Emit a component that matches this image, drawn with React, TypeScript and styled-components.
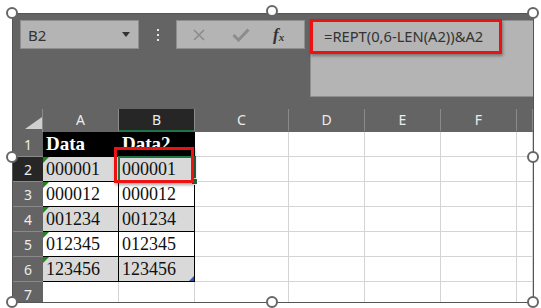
import React from 'react';
import styled, { createGlobalStyle } from 'styled-components';

const GlobalStyle = createGlobalStyle`
  html, body {
    margin: 0;
    padding: 0;
    background: #ffffff;
  }
  body {
    font-family: 'Noto Sans', 'Open Sans', sans-serif;
  }
`;

const columns = ['A', 'B', 'C', 'D', 'E', 'F', ''];
const colWidths = '30px 76px 76px 94px 76px 76px 76px 1fr';

const rows = [
  ['Data', 'Data2'],
  ['000001', '000001'],
  ['000012', '000012'],
  ['001234', '001234'],
  ['012345', '012345'],
  ['123456', '123456'],
  ['', ''],
];

const handles = [
  { x: 12, y: 13 },
  { x: 272, y: 11 },
  { x: 533, y: 13 },
  { x: 12, y: 157 },
  { x: 533, y: 157 },
  { x: 12, y: 302 },
  { x: 272, y: 302 },
  { x: 533, y: 302 },
];

const App: React.FC = () => {
  return (
    <Stage>
      <GlobalStyle />
      <Frame>
        <Toolbar>
          <NameBox>
            <span>B2</span>
            <DropArrow />
          </NameBox>
          <Dots>
            <i />
            <i />
            <i />
          </Dots>
          <FxButtons>
            <ToolIcon>
              <svg width="14" height="14" viewBox="0 0 14 14">
                <path d="M2 2 L12 12 M12 2 L2 12" stroke="#8c8c8c" strokeWidth="1.6" fill="none" />
              </svg>
            </ToolIcon>
            <ToolIcon>
              <svg width="18" height="14" viewBox="0 0 18 14">
                <path d="M1.5 7 L6.5 12 L16.5 1.5" stroke="#8c8c8c" strokeWidth="3" fill="none" />
              </svg>
            </ToolIcon>
            <FxLabel>
              f<sub>x</sub>
            </FxLabel>
          </FxButtons>
          <FormulaBar>
            <Formula>=REPT(0,6-LEN(A2))&amp;A2</Formula>
            <RedBox style={{ left: -1, top: -2, width: 192, height: 35 }} />
          </FormulaBar>
        </Toolbar>

        <Sheet>
          <Corner>
            <svg width="17" height="12" viewBox="0 0 17 12">
              <path d="M0 12 L17 12 L17 0 Z" fill="#cfcfcf" />
            </svg>
          </Corner>
          {columns.map((c, i) => (
            <ColHeader key={i} selected={c === 'B'}>
              {c}
            </ColHeader>
          ))}

          {rows.map((r, ri) => {
            const rowNo = ri + 1;
            const shaded = rowNo % 2 === 0 && rowNo <= 6;
            return (
              <React.Fragment key={ri}>
                <RowHeader selected={rowNo === 2}>{rowNo}</RowHeader>
                {r.map((v, ci) => (
                  <Cell
                    key={ci}
                    kind={rowNo === 1 ? 'title' : rowNo <= 6 ? (shaded ? 'shaded' : 'plain') : 'empty'}
                  >
                    {ci === 0 && rowNo >= 2 && rowNo <= 6 && <TextFlag />}
                    {ci === 1 && rowNo === 6 && <BlueMark />}
                    {ci === 1 && rowNo === 2 && (
                      <>
                        <Selection />
                        <FillHandle />
                        <RedBox style={{ left: -5, top: -10, width: 80, height: 36 }} />
                      </>
                    )}
                    <CellText bold={rowNo === 1}>{v}</CellText>
                  </Cell>
                ))}
                {[0, 1, 2, 3, 4].map((k) => (
                  <EmptyCell key={k} />
                ))}
              </React.Fragment>
            );
          })}
        </Sheet>
      </Frame>
      {handles.map((h, i) => (
        <Handle key={i} style={{ left: h.x - 6, top: h.y - 6 }} />
      ))}
    </Stage>
  );
};

const Stage = styled.div`
  position: relative;
  width: 541px;
  height: 308px;
  overflow: hidden;
  padding: 13px 0 0 12px;
  box-sizing: border-box;
`;

const Frame = styled.div`
  width: 522px;
  height: 290px;
  box-sizing: border-box;
  border: 1px solid #555555;
  background: #646464;
  overflow: hidden;
  display: flex;
  flex-direction: column;
`;

const Toolbar = styled.div`
  display: flex;
  align-items: flex-start;
  padding: 6px 0 0 7px;
  height: 77px;
  margin-bottom: 12px;
  flex-shrink: 0;
`;

const NameBox = styled.div`
  width: 119px;
  height: 29px;
  box-sizing: border-box;
  background: #b4b4b4;
  border: 1px solid #8e8e8e;
  display: flex;
  align-items: center;
  justify-content: space-between;
  padding: 0 8px 0 7px;
  font-size: 15px;
  color: #333333;
`;

const DropArrow = styled.span`
  width: 0;
  height: 0;
  border-left: 4px solid transparent;
  border-right: 4px solid transparent;
  border-top: 5px solid #333333;
`;

const Dots = styled.div`
  width: 37px;
  height: 29px;
  display: flex;
  flex-direction: column;
  align-items: center;
  justify-content: center;
  gap: 3px;

  i {
    display: block;
    width: 2px;
    height: 2px;
    background: #e6e6e6;
  }
`;

const FxButtons = styled.div`
  width: 129px;
  height: 29px;
  box-sizing: border-box;
  background: #b4b4b4;
  border: 1px solid #8e8e8e;
  display: flex;
  align-items: center;
  padding: 0 0 0 15px;
`;

const ToolIcon = styled.span`
  width: 40px;
  display: flex;
  align-items: center;
  justify-content: flex-start;
`;

const FxLabel = styled.span`
  font-family: 'Liberation Serif', serif;
  font-style: italic;
  font-weight: bold;
  font-size: 17px;
  color: #333333;
  margin-left: 1px;

  sub {
    font-size: 11px;
    vertical-align: -1px;
  }
`;

const FormulaBar = styled.div`
  position: relative;
  flex: 1;
  height: 77px;
  margin-left: 5px;
  box-sizing: border-box;
  background: #b4b4b4;
  border: 1px solid #8e8e8e;
  border-right: none;
  padding: 5px 0 0 13px;
`;

const Formula = styled.div`
  font-size: 14.7px;
  color: #333333;
  white-space: nowrap;
`;

const RedBox = styled.div`
  position: absolute;
  box-sizing: border-box;
  border: 3px solid #ee1111;
  box-shadow: 1px 2px 3px rgba(0, 0, 0, 0.35);
  pointer-events: none;
  z-index: 3;
`;

const Sheet = styled.div`
  display: grid;
  grid-template-columns: ${colWidths};
  grid-template-rows: 23px repeat(7, 25px);
  flex: 1;
  background: #ffffff;
`;

const Corner = styled.div`
  background: #646464;
  border-right: 1px solid #8a8a8a;
  display: flex;
  align-items: flex-end;
  justify-content: flex-end;
  padding: 0 0 3px 0;
`;

const ColHeader = styled.div<{ selected?: boolean }>`
  background: ${(p) => (p.selected ? '#262626' : '#646464')};
  border-right: 1px solid #8a8a8a;
  border-bottom: 2px solid ${(p) => (p.selected ? '#217346' : '#646464')};
  box-sizing: border-box;
  color: #ececec;
  font-size: 14px;
  display: flex;
  align-items: center;
  justify-content: center;
`;

const RowHeader = styled.div<{ selected?: boolean }>`
  background: ${(p) => (p.selected ? '#262626' : '#646464')};
  border-bottom: 1px solid #8a8a8a;
  box-sizing: border-box;
  color: #ececec;
  font-size: 14px;
  display: flex;
  align-items: center;
  justify-content: center;
`;

type CellKind = 'title' | 'shaded' | 'plain' | 'empty';

const cellBg: Record<CellKind, string> = {
  title: '#000000',
  shaded: '#d9d9d9',
  plain: '#ffffff',
  empty: '#ffffff',
};

const Cell = styled.div<{ kind: CellKind }>`
  position: relative;
  background: ${(p) => cellBg[p.kind]};
  color: ${(p) => (p.kind === 'title' ? '#ffffff' : '#111111')};
  border-right: 1px solid ${(p) => (p.kind === 'empty' ? '#d4d4d4' : '#000000')};
  border-bottom: 1px solid ${(p) => (p.kind === 'empty' ? '#d4d4d4' : '#000000')};
  box-sizing: border-box;
  display: flex;
  align-items: flex-end;
  padding: 0 0 1px 3px;
`;

const CellText = styled.span<{ bold?: boolean }>`
  font-family: 'Liberation Serif', 'Times New Roman', serif;
  font-size: ${(p) => (p.bold ? '19px' : '18px')};
  font-weight: ${(p) => (p.bold ? 'bold' : 'normal')};
  line-height: 22px;
  white-space: nowrap;
`;

const EmptyCell = styled.div`
  border-right: 1px solid #d4d4d4;
  border-bottom: 1px solid #d4d4d4;
  background: #ffffff;
`;

const TextFlag = styled.span`
  position: absolute;
  left: 0;
  top: 0;
  width: 0;
  height: 0;
  border-top: 6px solid #1a8a1a;
  border-right: 6px solid transparent;
`;

const BlueMark = styled.span`
  position: absolute;
  right: 0;
  bottom: 0;
  width: 0;
  height: 0;
  border-bottom: 5px solid #3355bb;
  border-left: 5px solid transparent;
`;

const Selection = styled.span`
  position: absolute;
  left: -1px;
  top: -1px;
  right: -2px;
  bottom: -1px;
  border: 2px solid #217346;
  pointer-events: none;
`;

const FillHandle = styled.span`
  position: absolute;
  right: -4px;
  bottom: -4px;
  width: 5px;
  height: 5px;
  background: #217346;
  border: 1px solid #ffffff;
  z-index: 2;
`;

const Handle = styled.span`
  position: absolute;
  width: 12px;
  height: 12px;
  box-sizing: border-box;
  border-radius: 50%;
  border: 2px solid #666666;
  background: #ffffff;
  z-index: 5;
`;

export default App;
